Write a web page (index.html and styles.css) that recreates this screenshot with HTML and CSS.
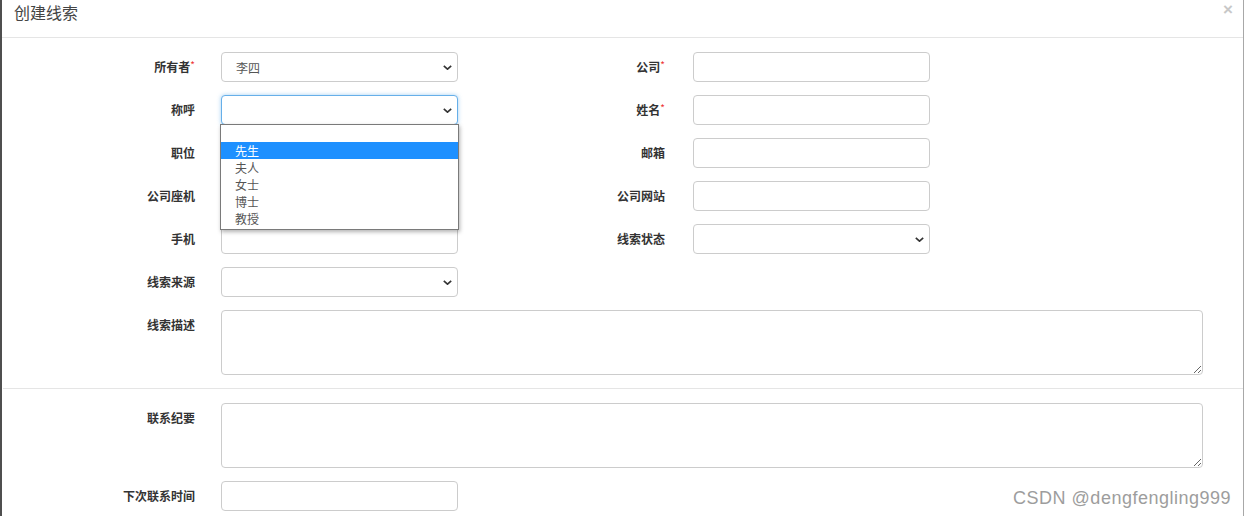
FILE: index.html
```html
<!DOCTYPE html>
<html lang="zh-CN">
<head>
<meta charset="utf-8">
<title>创建线索</title>
<link rel="stylesheet" href="styles.css">
</head>
<body>
<div class="edge"></div>
<div class="modal">
  <div class="modal-header">
    <h4 class="title">创建线索</h4>
    <span class="close">×</span>
  </div>
  <div class="modal-body">
    <div class="form-grid">
      <label class="lbl">所有者<span class="req">*</span></label>
      <div class="select"><span>李四</span><svg class="chev" viewBox="0 0 9 5" width="9" height="5"><path d="M0.8 0.8 L4.5 4.2 L8.2 0.8" fill="none" stroke="#333" stroke-width="1.6"/></svg></div>
      <label class="lbl lbl-r">公司<span class="req">*</span></label>
      <input class="inp" type="text">

      <label class="lbl">称呼</label>
      <div class="select-wrap">
        <div class="select focus"><span></span><svg class="chev" viewBox="0 0 9 5" width="9" height="5"><path d="M0.8 0.8 L4.5 4.2 L8.2 0.8" fill="none" stroke="#333" stroke-width="1.6"/></svg></div>
        <ul class="dropdown">
          <li class="opt"></li>
          <li class="opt active">先生</li>
          <li class="opt">夫人</li>
          <li class="opt">女士</li>
          <li class="opt">博士</li>
          <li class="opt">教授</li>
        </ul>
      </div>
      <label class="lbl lbl-r">姓名<span class="req">*</span></label>
      <input class="inp" type="text">

      <label class="lbl">职位</label>
      <input class="inp" type="text">
      <label class="lbl lbl-r">邮箱</label>
      <input class="inp" type="text">

      <label class="lbl">公司座机</label>
      <input class="inp" type="text">
      <label class="lbl lbl-r">公司网站</label>
      <input class="inp" type="text">

      <label class="lbl">手机</label>
      <input class="inp" type="text">
      <label class="lbl lbl-r">线索状态</label>
      <div class="select"><span></span><svg class="chev" viewBox="0 0 9 5" width="9" height="5"><path d="M0.8 0.8 L4.5 4.2 L8.2 0.8" fill="none" stroke="#333" stroke-width="1.6"/></svg></div>

      <label class="lbl">线索来源</label>
      <div class="select"><span></span><svg class="chev" viewBox="0 0 9 5" width="9" height="5"><path d="M0.8 0.8 L4.5 4.2 L8.2 0.8" fill="none" stroke="#333" stroke-width="1.6"/></svg></div>
      <div class="filler"></div>

      <label class="lbl">线索描述</label>
      <textarea class="area"></textarea>
    </div>

    <hr class="sep">

    <div class="form-grid">
      <label class="lbl">联系纪要</label>
      <textarea class="area"></textarea>

      <label class="lbl">下次联系时间</label>
      <input class="inp" type="text">
    </div>
  </div>
</div>
<div class="watermark">CSDN @dengfengling999</div>
</body>
</html>
```

FILE: styles.css
```css
html, body {
  margin: 0;
  padding: 0;
  background: #fff;
}
body {
  display: flex;
  width: 1246px;
  height: 516px;
  overflow: hidden;
  position: relative;
  font-family: "Noto Sans CJK SC", "Noto Sans", "Liberation Sans", sans-serif;
  color: #333;
}
.edge {
  width: 2px;
  flex: none;
  background: #4f4f4f;
}
.modal {
  width: 1241px;
  flex: none;
  border-right: 1px solid #a8a8a8;
  background: #fff;
}
.modal-header {
  height: 38px;
  box-sizing: border-box;
  border-bottom: 1px solid #e5e5e5;
  display: flex;
  justify-content: space-between;
  align-items: flex-start;
  padding: 0 10px 0 12px;
}
.title {
  margin: 0;
  font-size: 16px;
  font-weight: normal;
  line-height: 24px;
  color: #444;
}
.close {
  font-family: "Liberation Sans", Arial, sans-serif;
  font-size: 17px;
  font-weight: bold;
  line-height: 17px;
  color: #c8c8c8;
  margin-top: 1px;
}
.modal-body {
  padding-top: 14px;
}
.form-grid {
  display: grid;
  grid-template-columns: 219px 237px 235px 237px 273px;
  row-gap: 13px;
  align-items: start;
}
.lbl {
  grid-column: 1;
  text-align: right;
  padding-right: 26px;
  font-size: 12px;
  font-weight: bold;
  line-height: 30px;
  color: #333;
  white-space: nowrap;
}
.lbl-r {
  grid-column: 3;
  padding-right: 28px;
}
.req {
  color: #e33;
  font-size: 10px;
  font-weight: normal;
  vertical-align: 3px;
  line-height: 10px;
}
.inp, .select {
  box-sizing: border-box;
  height: 30px;
  width: 237px;
  border: 1px solid #ccc;
  border-radius: 4px;
  background: #fff;
  margin: 0;
  font-size: 12px;
}
.inp {
  padding: 0 10px;
  outline: none;
}
.select {
  display: flex;
  align-items: center;
  justify-content: space-between;
  padding: 0 5px 0 14px;
  color: #555;
}
.select.focus {
  border-color: #66afe9;
  box-shadow: 0 0 4px rgba(102, 175, 233, 0.6);
}
.chev {
  display: block;
}
.select-wrap {
  position: relative;
  height: 30px;
}
.dropdown {
  position: absolute;
  left: -1px;
  top: 29px;
  width: 239px;
  box-sizing: border-box;
  margin: 0;
  padding: 0 0 2px 0;
  list-style: none;
  background: #fff;
  border: 1px solid #7a7a7a;
  box-shadow: 1px 2px 4px rgba(0, 0, 0, 0.3);
  z-index: 5;
}
.opt {
  height: 17px;
  line-height: 17px;
  padding-left: 14px;
  font-size: 12px;
  color: #555;
}
.opt.active {
  background: #1e90ff;
  color: #fff;
}
.filler {
  grid-column: 3 / 6;
}
.area {
  grid-column: 2 / 6;
  width: 982px;
  height: 65px;
  box-sizing: border-box;
  border: 1px solid #ccc;
  border-radius: 4px;
  margin: 0;
  padding: 6px 10px;
  outline: none;
  font-size: 12px;
  font-family: inherit;
}
.sep {
  margin: 13px 0 14px 1px;
  border: 0;
  border-top: 1px solid #e5e5e5;
  height: 0;
}
.watermark {
  position: absolute;
  right: 15px;
  bottom: 8px;
  font-family: "Liberation Sans", Arial, sans-serif;
  font-size: 18px;
  letter-spacing: 0.5px;
  color: #9d9d9d;
  line-height: 20px;
  text-shadow: 0 0 1px #fff;
}
```
